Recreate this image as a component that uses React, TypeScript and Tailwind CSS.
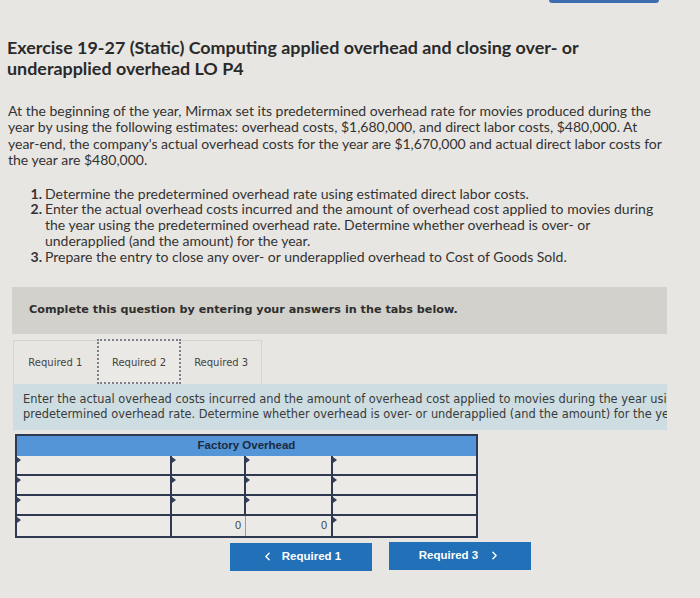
import { ChevronLeft, ChevronRight } from "lucide-react";

const sans = { fontFamily: "Lato, 'Liberation Sans', sans-serif" };

function Marker() {
  return (
    <span className="absolute left-0 top-[1px] h-0 w-0 border-y-[3px] border-l-[4px] border-y-transparent border-l-[#34405a]" />
  );
}

function Cell({
  marker = true,
  value,
  className = "",
}: {
  marker?: boolean;
  value?: string;
  className?: string;
}) {
  return (
    <div
      className={`relative flex h-[20px] items-center justify-end bg-[#eceae6] pr-[4px] text-[11px] text-[#444] ${className}`}
      style={{ fontFamily: "'Liberation Sans', Arial, sans-serif" }}
    >
      {marker && <Marker />}
      {value}
    </div>
  );
}

export default function App() {
  const rows = [0, 1, 2];
  return (
    <div className="h-[598px] w-[700px] overflow-hidden bg-[#e8e6e2] text-[#2d2d2d]">
      <div className="ml-[549px] h-[3px] w-[110px] rounded-b-sm bg-[#3d6fb0]" />

      <h1
        className="mt-[34px] whitespace-nowrap px-[7px] text-[17.9px] font-bold leading-[21px] text-[#2a2a2a]"
        style={sans}
      >
        Exercise 19-27 (Static) Computing applied overhead and closing over- or
        <br />
        underapplied overhead LO P4
      </h1>

      <p
        className="mt-[24px] whitespace-nowrap px-[8px] text-[14px] leading-[16.4px] text-[#333]"
        style={sans}
      >
        At the beginning of the year, Mirmax set its predetermined overhead rate for movies produced during the
        <br />
        year by using the following estimates: overhead costs, $1,680,000, and direct labor costs, $480,000. At
        <br />
        year-end, the company's actual overhead costs for the year are $1,670,000 and actual direct labor costs for
        <br />
        the year are $480,000.
      </p>

      <ol
        className="mt-[17px] whitespace-nowrap text-[14px] leading-[15.8px] text-[#333]"
        style={sans}
      >
        <li className="flex">
          <span className="w-[45px] pr-[3px] text-right font-bold">1.</span>
          <span>Determine the predetermined overhead rate using estimated direct labor costs.</span>
        </li>
        <li className="flex">
          <span className="w-[45px] pr-[3px] text-right font-bold">2.</span>
          <span>
            Enter the actual overhead costs incurred and the amount of overhead cost applied to movies during
            <br />
            the year using the predetermined overhead rate. Determine whether overhead is over- or
            <br />
            underapplied (and the amount) for the year.
          </span>
        </li>
        <li className="flex">
          <span className="w-[45px] pr-[3px] text-right font-bold">3.</span>
          <span>Prepare the entry to close any over- or underapplied overhead to Cost of Goods Sold.</span>
        </li>
      </ol>

      <div
        className="ml-[12px] mt-[22px] flex h-[47px] w-[655px] items-center bg-[#d3d1cc] pl-[17px] text-[11.2px] font-bold text-[#2e2e2e]"
        style={{ fontFamily: "'DejaVu Sans', Verdana, sans-serif" }}
      >
        Complete this question by entering your answers in the tabs below.
      </div>

      <div
        className="ml-[13px] mt-[6px] w-[654px]"
        style={{ fontFamily: "'DejaVu Sans', Verdana, sans-serif" }}
      >
        <div className="flex h-[44px] w-[249px] items-stretch border-l border-r border-t border-[#d6d4cf] text-[10px] text-[#444]">
          <div className="flex w-[83px] items-center justify-center pt-[1px]">Required 1</div>
          <div className="-mt-[2px] flex w-[85px] items-center justify-center border-2 border-dotted border-[#7c7f88] bg-[#ebe9e5] pt-[2px]">
            Required 2
          </div>
          <div className="flex w-[80px] items-center justify-center pt-[1px]">Required 3</div>
        </div>
        <div className="h-[46px] overflow-hidden whitespace-nowrap bg-[#cedde1] pl-[10px] pt-[8px] text-[11.4px] leading-[15px] text-[#3a3a3a]">
          Enter the actual overhead costs incurred and the amount of overhead cost applied to movies during the year using the
          <br />
          predetermined overhead rate. Determine whether overhead is over- or underapplied (and the amount) for the year.
        </div>
      </div>

      <div
        className="ml-[15px] mt-[4px] w-[463px] border-2 border-[#2f3a52]"
        style={{ fontFamily: "'Liberation Sans', Arial, sans-serif" }}
      >
        <div className="flex h-[20px] items-center justify-center bg-[#5395d6] text-[11.5px] font-bold text-[#1d2a40]">
          Factory Overhead
        </div>
        <div className="grid grid-cols-[155px_74px_87px_143px] gap-0 bg-[#2f3a52]">
          {rows.map((r) => (
            <div key={r} className="contents">
              <Cell className="border-b-2 border-r-2 border-[#2f3a52]" />
              <Cell className="border-b-2 border-r-2 border-[#2f3a52]" />
              <Cell className="border-b-2 border-r-2 border-[#2f3a52]" />
              <Cell className="border-b-2 border-[#2f3a52]" />
            </div>
          ))}
          <Cell className="border-r-2 border-[#2f3a52]" />
          <Cell marker={false} value="0" className="border-r border-[#9a9a9a]" />
          <Cell marker={false} value="0" className="border-r-2 border-[#2f3a52]" />
          <Cell />
        </div>
      </div>

      <div
        className="ml-[230px] mt-[5px] flex gap-[17px] text-[11.5px] font-bold text-white"
        style={{ fontFamily: "'Liberation Sans', Arial, sans-serif" }}
      >
        <button className="flex h-[28px] w-[142px] items-center justify-center gap-[8px] bg-[#2170b8]">
          <ChevronLeft className="h-[13px] w-[13px]" strokeWidth={2.5} />
          Required 1
        </button>
        <button className="-mt-[1px] flex h-[28px] w-[142px] items-center justify-center gap-[10px] bg-[#2170b8]">
          Required 3
          <ChevronRight className="h-[13px] w-[13px]" strokeWidth={2.5} />
        </button>
      </div>
    </div>
  );
}
